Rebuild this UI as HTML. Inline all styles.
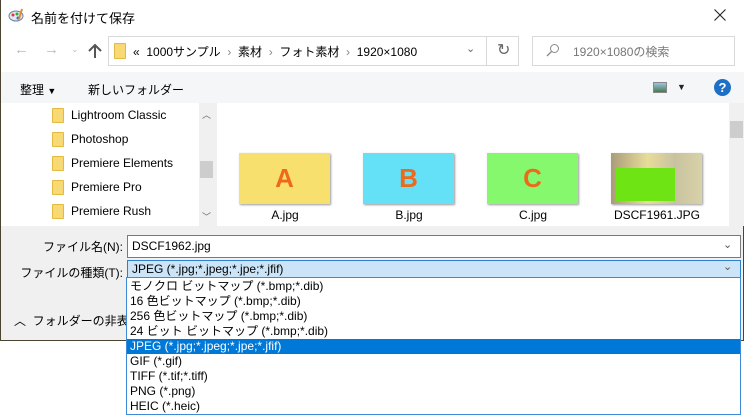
<!DOCTYPE html>
<html><head><meta charset="utf-8"><style>
*{box-sizing:border-box;margin:0;padding:0}
body{width:746px;height:416px;background:#fff;position:relative;overflow:hidden;font-family:"Liberation Sans","Noto Sans CJK JP",sans-serif;font-size:12px;color:#000}
.a{position:absolute}
.win{left:0;top:0;width:744px;height:341px;border:1px solid #4a4430;border-top:none;background:#f0f0f0}
.fold{position:absolute;width:12px;height:15px;background:#f8d975;border:1px solid #e3b93f;border-radius:1px}
.thumb{position:absolute;width:91px;height:51px;box-shadow:1px 1px 2px #999;font:bold 26px "Liberation Sans",sans-serif;color:#ee6a1a;text-align:center;line-height:51px}
.lbl{position:absolute;width:120px;text-align:center;font-size:12px}
.item{height:15px;line-height:15px;padding-left:3px;font-size:12px;white-space:nowrap}
</style></head><body>
<div class="a win">
 <div class="a" style="left:0;top:0;width:743px;height:72px;background:#fff"></div>
 <svg class="a" style="left:7px;top:7px" width="18" height="16"><ellipse cx="8" cy="9" rx="7" ry="5" fill="#dfe8f5" stroke="#6a7fa8"/><circle cx="5" cy="8" r="1.5" fill="#e33"/><circle cx="9" cy="7" r="1.5" fill="#3a3"/><circle cx="10" cy="11" r="1.5" fill="#36c"/><path d="M14 2 L11 12" stroke="#e08a2a" stroke-width="2"/></svg>
 <div class="a" style="left:30px;top:8px;font-size:13px">名前を付けて保存</div>
 <svg class="a" style="left:713px;top:9px" width="12" height="12"><path d="M0.5 0.5L11.5 11.5M11.5 0.5L0.5 11.5" stroke="#222" stroke-width="1.1"/></svg>
 <div class="a" style="left:13px;top:41px;color:#bbb;font-size:15px">←</div>
 <div class="a" style="left:43px;top:41px;color:#bbb;font-size:15px">→</div>
 <div class="a" style="left:70px;top:44px;color:#bbb;font-size:9px">⌄</div>
 <svg class="a" style="left:87px;top:43px" width="14" height="16"><path d="M7 15V2M1 8L7 2L13 8" stroke="#555" stroke-width="2" fill="none"/></svg>
 <div class="a" style="left:107px;top:36px;width:411px;height:30px;border:1px solid #d9d9d9;background:#fff"></div>
 <div class="a" style="left:485px;top:37px;width:1px;height:28px;background:#d9d9d9"></div>
 <div class="fold" style="left:113px;top:43px;height:16px"></div>
 <div class="a" style="left:132px;top:43px;font-size:12px;white-space:nowrap">« &nbsp;1000サンプル &nbsp;<span style="color:#888">›</span>&nbsp; 素材 &nbsp;<span style="color:#888">›</span>&nbsp; フォト素材 &nbsp;<span style="color:#888">›</span>&nbsp; 1920×1080</div>
 <div class="a" style="left:465px;top:42px;color:#666;font-size:11px">⌄</div>
 <div class="a" style="left:496px;top:40px;color:#666;font-size:16px">↻</div>
 <div class="a" style="left:531px;top:36px;width:203px;height:30px;border:1px solid #d9d9d9;background:#fff"></div>
 <svg class="a" style="left:545px;top:43px" width="14" height="14"><circle cx="8.5" cy="5.5" r="4" stroke="#888" fill="none"/><path d="M5.5 8.5L1 13" stroke="#888" stroke-width="1.3"/></svg>
 <div class="a" style="left:572px;top:43px;color:#777">1920×1080の検索</div>
 <div class="a" style="left:0;top:72px;width:743px;height:31px;background:#f5f6f7"></div>
 <div class="a" style="left:19px;top:81px">整理 <span style="font-size:9px">▼</span></div>
 <div class="a" style="left:87px;top:81px">新しいフォルダー</div>
 <div class="a" style="left:652px;top:82px;width:14px;height:11px;border:1px solid #888;background:linear-gradient(#9cc4e6,#4a7a4a)"></div>
 <div class="a" style="left:676px;top:82px;font-size:9px;color:#223">▼</div>
 <div class="a" style="left:713px;top:79px;width:17px;height:17px;border-radius:50%;background:#1f6fc4;color:#fff;font-weight:bold;text-align:center;line-height:17px;font-size:13px">?</div>
 <div class="a" style="left:0;top:103px;width:213px;height:123px;background:#fff"></div>
 <div class="a" style="left:198px;top:103px;width:15px;height:123px;background:#f0f0f0"></div>
 <div class="a" style="left:199px;top:161px;width:13px;height:17px;background:#cdcdcd"></div>
 <div class="a" style="left:201px;top:108px;font-size:9px;color:#666">︿</div>
 <div class="a" style="left:201px;top:210px;font-size:9px;color:#666">﹀</div>
 <div class="fold" style="left:51px;top:108px"></div><div class="a" style="left:70px;top:108px">Lightroom Classic</div>
 <div class="fold" style="left:51px;top:132px"></div><div class="a" style="left:70px;top:132px">Photoshop</div>
 <div class="fold" style="left:51px;top:156px"></div><div class="a" style="left:70px;top:156px">Premiere Elements</div>
 <div class="fold" style="left:51px;top:180px"></div><div class="a" style="left:70px;top:180px">Premiere Pro</div>
 <div class="fold" style="left:51px;top:204px"></div><div class="a" style="left:70px;top:204px">Premiere Rush</div>
 <div class="a" style="left:216px;top:103px;width:527px;height:123px;background:#fff"></div>
 <div class="a" style="left:728px;top:103px;width:15px;height:123px;background:#f0f0f0"></div>
 <div class="a" style="left:729px;top:121px;width:13px;height:17px;background:#cdcdcd"></div>
 <div class="thumb" style="left:238px;top:153px;background:#f8e06e">A</div>
 <div class="thumb" style="left:362px;top:153px;background:#64e0f7">B</div>
 <div class="thumb" style="left:486px;top:153px;background:#86f86e">C</div>
 <div class="thumb" style="left:610px;top:153px;background:linear-gradient(90deg,#a99c7a,#e8dc9a 40%,#c9c2a0 70%,#d8d2a8)"><div class="a" style="left:5px;top:15px;width:59px;height:33px;background:#6ee414"></div></div>
 <div class="lbl" style="left:224px;top:208px">A.jpg</div>
 <div class="lbl" style="left:348px;top:208px">B.jpg</div>
 <div class="lbl" style="left:472px;top:208px">C.jpg</div>
 <div class="lbl" style="left:596px;top:208px">DSCF1961.JPG</div>
 <div class="a" style="left:0;top:238px;width:122px;text-align:right">ファイル名(N):</div>
 <div class="a" style="left:126px;top:235px;width:614px;height:23px;border:1px solid #7a7a7a;background:#fff;padding:3px 4px">DSCF1962.jpg</div>
 <div class="a" style="left:722px;top:238px;color:#555;font-size:11px">⌄</div>
 <div class="a" style="left:0;top:264px;width:122px;text-align:right">ファイルの種類(T):</div>
 <div class="a" style="left:126px;top:260px;width:614px;height:18px;border:1px solid #2f7fd0;background:#cce4f7;padding:1px 4px">JPEG (*.jpg;*.jpeg;*.jpe;*.jfif)</div>
 <div class="a" style="left:722px;top:260px;color:#555;font-size:11px">⌄</div>
 <div class="a" style="left:13px;top:312px">︿&nbsp; フォルダーの非表示</div>
</div>
<div class="a" style="left:126px;top:277px;width:615px;height:138px;border:1px solid #3c8ad8;background:#fff;padding-top:1px">
 <div class="item">モノクロ ビットマップ (*.bmp;*.dib)</div>
 <div class="item">16 色ビットマップ (*.bmp;*.dib)</div>
 <div class="item">256 色ビットマップ (*.bmp;*.dib)</div>
 <div class="item">24 ビット ビットマップ (*.bmp;*.dib)</div>
 <div class="item" style="background:#0078d7;color:#fff">JPEG (*.jpg;*.jpeg;*.jpe;*.jfif)</div>
 <div class="item">GIF (*.gif)</div>
 <div class="item">TIFF (*.tif;*.tiff)</div>
 <div class="item">PNG (*.png)</div>
 <div class="item">HEIC (*.heic)</div>
</div>
</body></html>
